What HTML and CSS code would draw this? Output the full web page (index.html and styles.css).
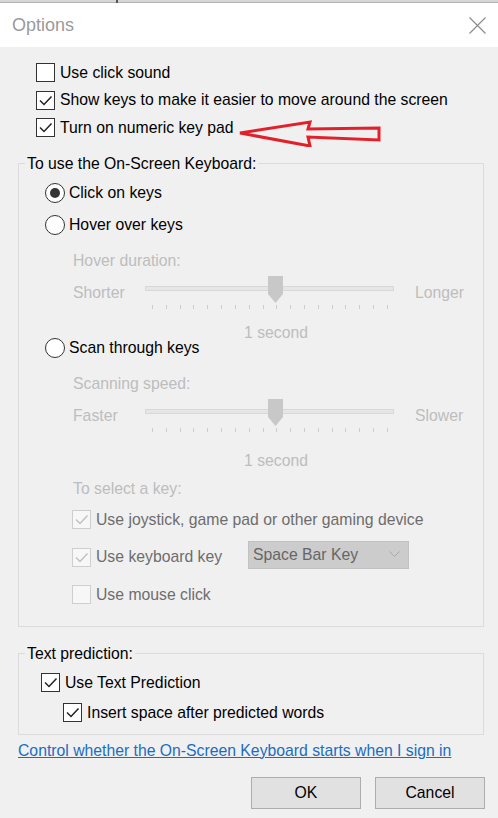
FILE: index.html
```html
<!DOCTYPE html>
<html lang="en">
<head>
<meta charset="utf-8">
<title>Options</title>
<link rel="stylesheet" href="styles.css">
</head>
<body>
<div class="topstrip"><span class="mark"></span></div>
<div class="titlebar">
  <span class="title">Options</span>
  <svg class="close" width="17" height="17" viewBox="0 0 17 17"><path d="M0.5 0.5 L16.5 16.5 M16.5 0.5 L0.5 16.5" stroke="#8a8a8a" stroke-width="1.1" fill="none"/></svg>
</div>
<div class="main">
  <div class="row"><span class="cb"></span><span>Use click sound</span></div>
  <div class="row"><span class="cb"><svg viewBox="0 0 17 17"><path d="M3 8.5 L7 12.5 L14.5 4.5" /></svg></span><span>Show keys to make it easier to move around the screen</span></div>
  <div class="row"><span class="cb"><svg viewBox="0 0 17 17"><path d="M3 8.5 L7 12.5 L14.5 4.5" /></svg></span><span>Turn on numeric key pad</span>
    <svg class="arrow" width="144" height="32" viewBox="0 0 144 32"><polygon points="2,18 72,7 70,14 141,13 141,25 70,22 72,31" fill="none" stroke="#e3202a" stroke-width="3" stroke-linejoin="miter"/></svg>
  </div>

  <fieldset class="group osk">
    <legend>To use the On-Screen Keyboard:</legend>
    <div class="rrow"><span class="radio on"></span><span>Click on keys</span></div>
    <div class="rrow"><span class="radio"></span><span>Hover over keys</span></div>
    <div class="dimlabel">Hover duration:</div>
    <div class="slider">
      <span class="lab">Shorter</span>
      <div class="track-area">
        <div class="track"></div>
        <svg class="thumb" width="15" height="27" viewBox="0 0 15 27"><polygon points="0,0 15,0 15,18 7.5,27 0,18" fill="#c8c8c8"/></svg>
        <div class="ticks"><i></i><i></i><i></i><i></i><i></i><i></i><i></i><i></i><i></i><i></i><i></i><i></i><i></i><i></i><i></i><i></i><i></i><i></i></div>
      </div>
      <span class="lab right">Longer</span>
    </div>
    <div class="second s1">1 second</div>
    <div class="rrow scan"><span class="radio"></span><span>Scan through keys</span></div>
    <div class="dimlabel">Scanning speed:</div>
    <div class="slider">
      <span class="lab">Faster</span>
      <div class="track-area">
        <div class="track"></div>
        <svg class="thumb" width="15" height="27" viewBox="0 0 15 27"><polygon points="0,0 15,0 15,18 7.5,27 0,18" fill="#c8c8c8"/></svg>
        <div class="ticks"><i></i><i></i><i></i><i></i><i></i><i></i><i></i><i></i><i></i><i></i><i></i><i></i><i></i><i></i><i></i><i></i><i></i><i></i></div>
      </div>
      <span class="lab right">Slower</span>
    </div>
    <div class="second s2">1 second</div>
    <div class="dimlabel select">To select a key:</div>
    <div class="checks">
      <div class="crow"><span class="cb dis"><svg viewBox="0 0 17 17"><path d="M3 8.5 L7 12.5 L14.5 4.5" /></svg></span><span>Use joystick, game pad or other gaming device</span></div>
      <div class="crow"><span class="cb dis"><svg viewBox="0 0 17 17"><path d="M3 8.5 L7 12.5 L14.5 4.5" /></svg></span><span class="kblabel">Use keyboard key</span>
        <div class="combo"><span>Space Bar Key</span><svg width="11" height="7" viewBox="0 0 11 7"><polyline points="0.5,0.5 5.5,5.5 10.5,0.5" fill="none" stroke="#a9a9a9" stroke-width="1"/></svg></div>
      </div>
      <div class="crow"><span class="cb dis"></span><span>Use mouse click</span></div>
    </div>
  </fieldset>

  <fieldset class="group tp">
    <legend>Text prediction:</legend>
    <div class="trow"><span class="cb"><svg viewBox="0 0 17 17"><path d="M3 8.5 L7 12.5 L14.5 4.5" /></svg></span><span>Use Text Prediction</span></div>
    <div class="trow sub"><span class="cb"><svg viewBox="0 0 17 17"><path d="M3 8.5 L7 12.5 L14.5 4.5" /></svg></span><span>Insert space after predicted words</span></div>
  </fieldset>

  <div class="linkrow"><a class="link" href="#">Control whether the On-Screen Keyboard starts when I sign in</a></div>

  <div class="buttons">
    <button class="btn">OK</button>
    <button class="btn">Cancel</button>
  </div>
</div>
</body>
</html>
```
FILE: styles.css
```css
* { box-sizing: border-box; }
html, body { margin: 0; padding: 0; }
body {
  width: 498px;
  height: 818px;
  overflow: hidden;
  background: #f0f0f0;
  font-family: "Liberation Sans", Arial, sans-serif;
  font-size: 15.75px;
  color: #000;
}
.topstrip {
  height: 3px;
  background: #d6d6d6;
  border-bottom: 1px solid #b4b4b4;
  display: flex;
}
.topstrip .mark {
  margin-left: 116px;
  width: 2px;
  height: 3px;
  background: #555;
}
.titlebar {
  height: 44px;
  background: #fff;
  display: flex;
  align-items: center;
  justify-content: space-between;
  padding: 0 12px 0 12px;
}
.title { font-size: 18px; color: #9a9a9a; padding-top: 1px; }
.close { display: block; }
.main { padding-top: 12px; }
.row {
  display: flex;
  align-items: center;
  height: 27.5px;
  padding-left: 36px;
  white-space: nowrap;
}
.cb {
  width: 19px;
  height: 19px;
  border: 1px solid #333;
  background: #fff;
  margin-right: 5px;
  flex: none;
  display: flex;
}
.cb svg { width: 17px; height: 17px; }
.cb svg path { fill: none; stroke: #222; stroke-width: 1.5; }
.cb.dis { border-color: #cecece; background: #f7f7f7; }
.cb.dis svg path { stroke: #c2c2c2; }
.arrow { margin-left: 4px; flex: none; margin-top: 6px; }

.group {
  margin: 12px 14px 0 18px;
  padding: 4px 0 16px 0;
  border: 1px solid #dcdcdc;
  min-width: 0;
}
.group legend {
  margin-left: 6px;
  padding: 0 2px;
  line-height: 19px;
}
.rrow {
  display: flex;
  align-items: center;
  height: 32px;
  margin-left: 26px;
}
.rrow.scan { margin-top: -11px; }
.radio {
  width: 20px;
  height: 20px;
  border-radius: 50%;
  border: 1px solid #333;
  background: #fff;
  margin-right: 4px;
  display: flex;
  align-items: center;
  justify-content: center;
  flex: none;
}
.radio.on::after {
  content: "";
  width: 10px;
  height: 10px;
  border-radius: 50%;
  background: #333;
}
.dimlabel {
  margin-left: 54px;
  line-height: 20px;
  margin-top: 10px;
  color: #bdbdbd;
}
.dimlabel.select { margin-top: 8px; }
.slider {
  display: grid;
  grid-template-columns: 72px 249px auto;
  margin-left: 54px;
  height: 36px;
  margin-top: 5px;
  color: #bdbdbd;
}
.slider .lab { margin-top: 8.5px; line-height: 18px; }
.slider .lab.right { padding-left: 21px; }
.track-area { position: relative; }
.track {
  margin-top: 10px;
  height: 5px;
  border: 1px solid #d8d8d8;
  background: #e6e6e6;
}
.thumb { position: absolute; left: 123px; top: 0; }
.ticks {
  display: flex;
  justify-content: space-between;
  padding: 0 6px 0 7px;
  margin-top: 14px;
}
.ticks i { display: block; width: 1px; height: 4px; background: #cdcdcd; }
.second {
  margin-left: 225px;
  line-height: 20px;
  color: #bdbdbd;
}
.second.s1 { margin-top: 11px; }
.second.s2 { margin-top: 16px; }
.checks {
  margin-top: 6px;
  display: flex;
  flex-direction: column;
  gap: 7.5px;
}
.crow {
  display: flex;
  align-items: center;
  height: 30px;
  margin-left: 53px;
  color: #6d6d6d;
  white-space: nowrap;
}
.kblabel { width: 152px; }
.combo {
  width: 161px;
  height: 28px;
  background: #cccccc;
  border: 1px solid #c2c2c2;
  display: flex;
  align-items: center;
  justify-content: space-between;
  padding: 0 8px 0 4px;
  color: #666;
  margin-bottom: 5px;
}
.group.tp { margin-top: 17px; padding: 5px 0 6px 0; }
.trow {
  display: flex;
  align-items: center;
  height: 30px;
  margin-left: 22px;
  white-space: nowrap;
}
.trow.sub { margin-left: 44px; }
.linkrow { margin-top: 6px; padding-left: 18px; line-height: 20px; }
.link { color: #1a6dc2; text-decoration: underline; white-space: nowrap; }
.buttons {
  margin-top: 16px;
  display: flex;
  justify-content: flex-end;
  gap: 14px;
  padding-right: 13px;
}
.btn {
  width: 110px;
  height: 32px;
  background: #e1e1e1;
  border: 1px solid #adadad;
  font-family: "Liberation Sans", Arial, sans-serif;
  font-size: 15.75px;
  color: #000;
  padding: 0;
}
```
